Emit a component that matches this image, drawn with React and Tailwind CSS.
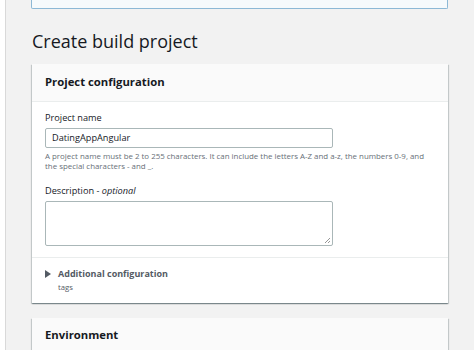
export default function App() {
  return (
    <div className="w-[474px] h-[353px] bg-white overflow-hidden" style={{ fontFamily: '"Open Sans", "Noto Sans", sans-serif' }}>
      <div className="ml-[5px] h-[350px] border-l border-[#d9d9d9] bg-[#f2f2f2] overflow-hidden pl-[26px] pr-[26px]">
        <div className="-ml-px h-[9px] border-x border-b border-[#8db9d6] bg-[#f6fafc] rounded-b-[2px]" />
        <h1 className="mt-[20px] h-[24px] leading-[24px] text-[18px] text-[#16191f] font-normal">Create build project</h1>
        <div className="mt-[11px] bg-white shadow-[0_1px_1px_0_rgba(0,28,36,0.3),1px_1px_1px_0_rgba(0,28,36,0.15),-1px_1px_1px_0_rgba(0,28,36,0.15)]">
          <div className="h-[38px] flex items-center px-[13px] bg-[#fafafa] border-b border-[#eaeded]">
            <span className="text-[11.3px] font-bold text-[#16191f]">Project configuration</span>
          </div>
          <div className="px-[13px] pt-[9px]">
            <div className="text-[9.2px] leading-[14px] text-[#16191f]">Project name</div>
            <div className="mt-[3px] w-[288px] h-[20px] border border-[#aab7b8] rounded-[2px] flex items-center px-[6px] text-[9.2px] text-[#16191f]">DatingAppAngular</div>
            <div className="mt-[4px] w-[384px] text-[7.9px] leading-[9.5px] text-[#687078]">A project name must be 2 to 255 characters. It can include the letters A-Z and a-z, the numbers 0-9, and the special characters - and _.</div>
            <div className="mt-[13px] text-[9.2px] leading-[14px] text-[#16191f]">Description - <i>optional</i></div>
            <div className="relative mt-[3px] w-[288px] h-[45px] border border-[#aab7b8] rounded-[2px]">
              <svg className="absolute right-[1px] bottom-[1px]" width="8" height="8" viewBox="0 0 8 8">
                <path d="M7 2 L2 7 M7 5 L5 7" stroke="#8a8a8a" strokeWidth="0.9" />
              </svg>
            </div>
          </div>
          <div className="mt-[11px] border-t border-[#eaeded] px-[13px] pt-[9px] pb-[10px]">
            <div className="flex items-center">
              <svg width="6" height="8" viewBox="0 0 6 8" className="mr-[7px]">
                <path d="M0 0 L6 4 L0 8 Z" fill="#545b64" />
              </svg>
              <span className="text-[9px] leading-[14px] font-bold text-[#545b64]">Additional configuration</span>
            </div>
            <div className="ml-[13px] mt-[0px] text-[7.7px] leading-[12px] text-[#545b64]">tags</div>
          </div>
        </div>
        <div className="mt-[15px] bg-white shadow-[0_1px_1px_0_rgba(0,28,36,0.3),1px_1px_1px_0_rgba(0,28,36,0.15),-1px_1px_1px_0_rgba(0,28,36,0.15)]">
          <div className="h-[36px] flex items-center px-[13px] bg-[#fafafa] border-b border-[#eaeded]">
            <span className="text-[11.3px] font-bold text-[#16191f]">Environment</span>
          </div>
          <div className="h-[40px]" />
        </div>
      </div>
    </div>
  );
}
